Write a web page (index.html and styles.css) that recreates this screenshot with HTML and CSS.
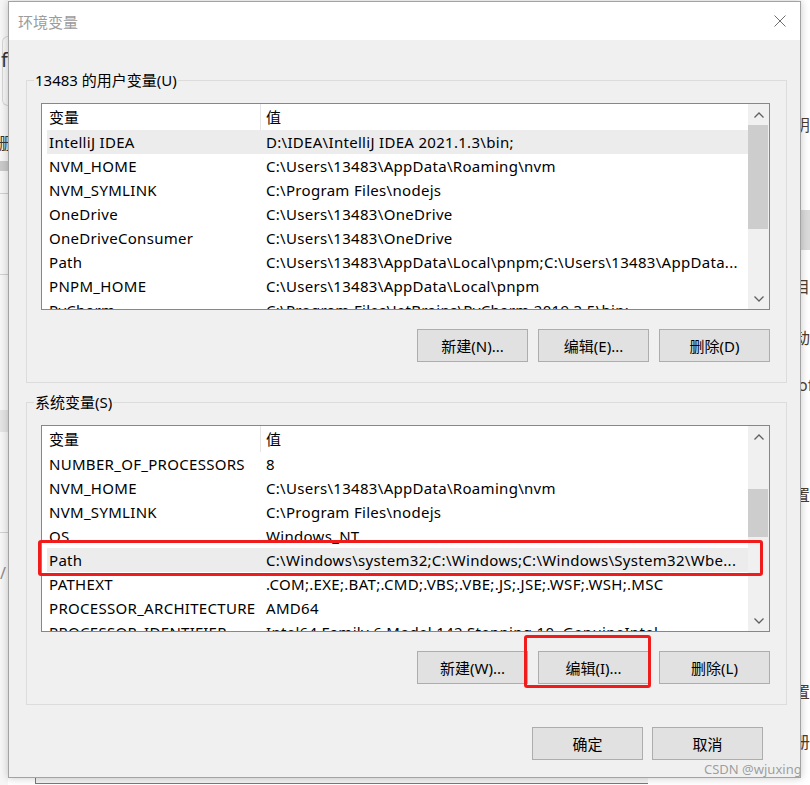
FILE: index.html
```html
<!DOCTYPE html>
<html>
<head>
  <meta charset="UTF-8">
  <title>环境变量</title>
  <link rel="stylesheet" href="styles.css">
</head>
<body>
  <div class="screen">
    <div class="side side-left">
      <span class="bg-ring"></span>
      <span class="bg-glyph bg-f">f</span>
      <span class="bg-glyph bg-del">删</span>
      <span class="bg-chip"></span>
      <span class="bg-line"></span>
      <span class="bg-line bg-line-2"></span>
      <span class="bg-shade"></span>
      <span class="bg-line bg-line-3"></span>
      <span class="bg-glyph bg-small">/</span>
    </div>

    <div class="main-col">
      <div class="dialog">
        <div class="titlebar">
          <span class="title">环境变量</span>
          <svg class="close" width="12" height="12" viewBox="0 0 12 12">
            <path d="M0.5 0.5 L11.5 11.5 M11.5 0.5 L0.5 11.5" stroke="#6f6f6f" stroke-width="1" fill="none"/>
          </svg>
        </div>

        <div class="dialog-body">
          <div class="group">
            <div class="legend">13483 的用户变量(U)</div>
            <div class="listview">
              <div class="lv-body">
                <div class="lv-header"><span class="col-name">变量</span><span class="col-value">值</span></div>
                <div class="lv-row selected"><span class="col-name">IntelliJ IDEA</span><span class="col-value">D:\IDEA\IntelliJ IDEA 2021.1.3\bin;</span></div>
                <div class="lv-row"><span class="col-name">NVM_HOME</span><span class="col-value">C:\Users\13483\AppData\Roaming\nvm</span></div>
                <div class="lv-row"><span class="col-name">NVM_SYMLINK</span><span class="col-value">C:\Program Files\nodejs</span></div>
                <div class="lv-row"><span class="col-name">OneDrive</span><span class="col-value">C:\Users\13483\OneDrive</span></div>
                <div class="lv-row"><span class="col-name">OneDriveConsumer</span><span class="col-value">C:\Users\13483\OneDrive</span></div>
                <div class="lv-row"><span class="col-name">Path</span><span class="col-value">C:\Users\13483\AppData\Local\pnpm;C:\Users\13483\AppData...</span></div>
                <div class="lv-row"><span class="col-name">PNPM_HOME</span><span class="col-value">C:\Users\13483\AppData\Local\pnpm</span></div>
                <div class="lv-row"><span class="col-name">PyCharm</span><span class="col-value">C:\Program Files\JetBrains\PyCharm 2019.3.5\bin;</span></div>
              </div>
              <div class="vscroll">
                <div class="sb-btn">
                  <svg width="10" height="6" viewBox="0 0 10 6"><polyline points="0.5,5.5 5,1 9.5,5.5" fill="none" stroke="#606060" stroke-width="1.3"/></svg>
                </div>
                <div class="sb-track"><div class="sb-thumb thumb-user"></div></div>
                <div class="sb-btn">
                  <svg width="10" height="6" viewBox="0 0 10 6"><polyline points="0.5,0.5 5,5 9.5,0.5" fill="none" stroke="#606060" stroke-width="1.3"/></svg>
                </div>
              </div>
            </div>
            <div class="btn-row">
              <button class="btn">新建(N)...</button>
              <button class="btn">编辑(E)...</button>
              <button class="btn">删除(D)</button>
            </div>
          </div>

          <div class="group">
            <div class="legend">系统变量(S)</div>
            <div class="listview">
              <div class="lv-body">
                <div class="lv-header"><span class="col-name">变量</span><span class="col-value">值</span></div>
                <div class="lv-row"><span class="col-name">NUMBER_OF_PROCESSORS</span><span class="col-value">8</span></div>
                <div class="lv-row"><span class="col-name">NVM_HOME</span><span class="col-value">C:\Users\13483\AppData\Roaming\nvm</span></div>
                <div class="lv-row"><span class="col-name">NVM_SYMLINK</span><span class="col-value">C:\Program Files\nodejs</span></div>
                <div class="lv-row"><span class="col-name">OS</span><span class="col-value">Windows_NT</span></div>
                <div class="lv-row selected"><span class="col-name">Path</span><span class="col-value">C:\Windows\system32;C:\Windows;C:\Windows\System32\Wbe...</span></div>
                <div class="lv-row"><span class="col-name">PATHEXT</span><span class="col-value">.COM;.EXE;.BAT;.CMD;.VBS;.VBE;.JS;.JSE;.WSF;.WSH;.MSC</span></div>
                <div class="lv-row"><span class="col-name">PROCESSOR_ARCHITECTURE</span><span class="col-value">AMD64</span></div>
                <div class="lv-row"><span class="col-name">PROCESSOR_IDENTIFIER</span><span class="col-value">Intel64 Family 6 Model 142 Stepping 10, GenuineIntel</span></div>
              </div>
              <div class="vscroll">
                <div class="sb-btn">
                  <svg width="10" height="6" viewBox="0 0 10 6"><polyline points="0.5,5.5 5,1 9.5,5.5" fill="none" stroke="#606060" stroke-width="1.3"/></svg>
                </div>
                <div class="sb-track"><div class="sb-thumb thumb-system"></div></div>
                <div class="sb-btn">
                  <svg width="10" height="6" viewBox="0 0 10 6"><polyline points="0.5,0.5 5,5 9.5,0.5" fill="none" stroke="#606060" stroke-width="1.3"/></svg>
                </div>
              </div>
            </div>
            <div class="btn-row">
              <button class="btn">新建(W)...</button>
              <button class="btn">编辑(I)...</button>
              <button class="btn">删除(L)</button>
            </div>
          </div>

          <div class="btn-row footer-row">
            <button class="btn">确定</button>
            <button class="btn">取消</button>
          </div>
        </div>

        <!-- red annotation boxes drawn over the dialog -->
        <div class="mark mark-path"></div>
        <div class="mark mark-edit"></div>
        <div class="watermark">CSDN @wjuxing</div>
      </div>
      <div class="under"></div>
    </div>

    <div class="side side-right">
      <span class="bg-glyph g1">阴</span>
      <span class="bg-bar"></span>
      <span class="bg-glyph g2">目</span>
      <span class="bg-glyph g3">动</span>
      <span class="bg-glyph g4">of</span>
      <span class="bg-glyph g5">置</span>
      <span class="bg-glyph g6">置</span>
      <span class="bg-glyph g7">册</span>
    </div>
  </div>
</body>
</html>
```

FILE: styles.css
```css
* {
  box-sizing: border-box;
}

body {
  margin: 0;
  width: 810px;
  height: 785px;
  overflow: hidden;
  background-color: #fff;
  font-family: "Noto Sans", "Noto Sans CJK SC", sans-serif;
  font-size: 15px;
  color: #000;
}

.screen {
  display: flex;
  height: 785px;
}

/* background windows peeking out at the edges */
.side {
  display: flex;
  flex-direction: column;
  overflow: hidden;
}

.side-left {
  width: 8px;
  background-color: #f6f6f6;
}

.side-right {
  flex: 1;
  background-color: #fff;
}

.bg-glyph {
  line-height: 20px;
  white-space: nowrap;
  color: #4e3d2b;
  font-size: 16px;
}

.bg-ring {
  height: 70px;
  margin: 36px 0 0 2px;
  border: 1px solid #d6d6d6;
  border-right: none;
  border-radius: 35px 0 0 35px;
}

.bg-f {
  margin: -56px 0 0 1px;
  color: #333;
  font-size: 20px;
}

.bg-del {
  margin: 63px 0 0 -1px;
  color: #333;
}

.bg-chip {
  height: 10px;
  margin-top: 8px;
  background-color: #c9c9c9;
}

.bg-line {
  height: 1px;
  margin-top: 22px;
  background-color: #d0d0d0;
}

.bg-line-2 {
  margin-top: 80px;
}

.bg-shade {
  height: 22px;
  margin-top: 135px;
  background-color: #e4e4e4;
}

.bg-line-3 {
  margin-top: 100px;
}

.bg-small {
  margin-top: 30px;
  color: #8a8a8a;
}

.side-right .bg-glyph {
  margin-left: -7px;
}

.g1 { margin-top: 115px; }
.g2 { margin-top: 27px; }
.g3 { margin-top: 31px; }
.g4 { margin-top: 27px; margin-left: -3px !important; }
.g5 { margin-top: 90px; }
.g6 { margin-top: 177px; }
.g7 { margin-top: 30px; }

.bg-bar {
  height: 40px;
  margin-top: 75px;
  background-color: #dadada;
}

.main-col {
  width: 793px;
  padding-top: 1px;
}

.under {
  width: 613px;
  height: 6px;
  margin-left: 27px;
  border-left: 1px solid #7a7a7a;
  border-bottom: 1px solid #7a7a7a;
  background-color: #f3f3f3;
}

/* dialog */
.dialog {
  position: relative;
  display: flex;
  flex-direction: column;
  height: 777px;
  border: 1px solid #a3a3a3;
  background-color: #f0f0f0;
  box-shadow: 0 0 8px rgba(0,0,0,0.22);
  overflow: hidden;
}

.titlebar {
  display: flex;
  align-items: center;
  justify-content: space-between;
  height: 38px;
  padding: 0 14px 0 9px;
  background-color: #fff;
}

.title {
  color: #9c9c9c;
  font-size: 15px;
}

.dialog-body {
  flex: 1;
  padding: 0 13px 0 17px;
}

.group {
  margin-top: 40px;
  border: 1px solid #dcdcdc;
  padding: 0 16px 20px 14px;
}

.group + .group {
  margin-top: 19px;
}

.legend {
  width: fit-content;
  margin: -11px 0 0 -7px;
  padding: 0 1px;
  line-height: 20px;
  background-color: #f0f0f0;
}

/* list view */
.listview {
  display: flex;
  height: 207px;
  margin-top: 13px;
  border: 1px solid #828790;
  background-color: #fff;
}

.lv-body {
  flex: 1;
  overflow: hidden;
}

.lv-header {
  display: flex;
  height: 26px;
  line-height: 26px;
}

.lv-header .col-name {
  width: 219px;
  padding-left: 7px;
  border-right: 1px solid #e5e5e5;
}

.lv-header .col-value {
  padding-left: 5px;
}

.lv-row {
  display: flex;
  height: 24px;
  margin-left: 5px;
  line-height: 24px;
  white-space: nowrap;
  letter-spacing: 0.3px;
}

.lv-row .col-name {
  flex: none;
  width: 214px;
  padding-left: 2px;
}

.lv-row .col-value {
  padding-left: 5px;
}

.lv-row.selected {
  background-color: #ececec;
}

.vscroll {
  display: flex;
  flex-direction: column;
  width: 21px;
  background-color: #f0f0f0;
}

.sb-btn {
  display: flex;
  align-items: center;
  justify-content: center;
  height: 21px;
}

.sb-track {
  flex: 1;
  padding-right: 1px;
}

.sb-thumb {
  background-color: #cdcdcd;
}

.thumb-user {
  height: 104px;
}

.thumb-system {
  height: 48px;
  margin-top: 42px;
}

/* buttons */
.btn-row {
  display: flex;
  justify-content: flex-end;
  gap: 10px;
  margin-top: 19px;
}

.btn {
  width: 111px;
  height: 33px;
  padding: 0;
  border: 1px solid #adadad;
  background-color: #e1e1e1;
  font: inherit;
  color: #000;
}

.footer-row {
  gap: 9px;
  margin-top: 22px;
  padding-right: 24px;
}

/* annotations */
.mark {
  position: absolute;
  border: 3px solid #f01c1c;
  border-radius: 3px;
}

.mark-path {
  left: 29px;
  top: 538px;
  width: 725px;
  height: 36px;
}

.mark-edit {
  left: 515px;
  top: 633px;
  width: 127px;
  height: 53px;
}

.watermark {
  position: absolute;
  left: 695px;
  top: 758px;
  font-size: 13px;
  line-height: 18px;
  white-space: nowrap;
  color: rgba(110,110,110,0.65);
}
```
